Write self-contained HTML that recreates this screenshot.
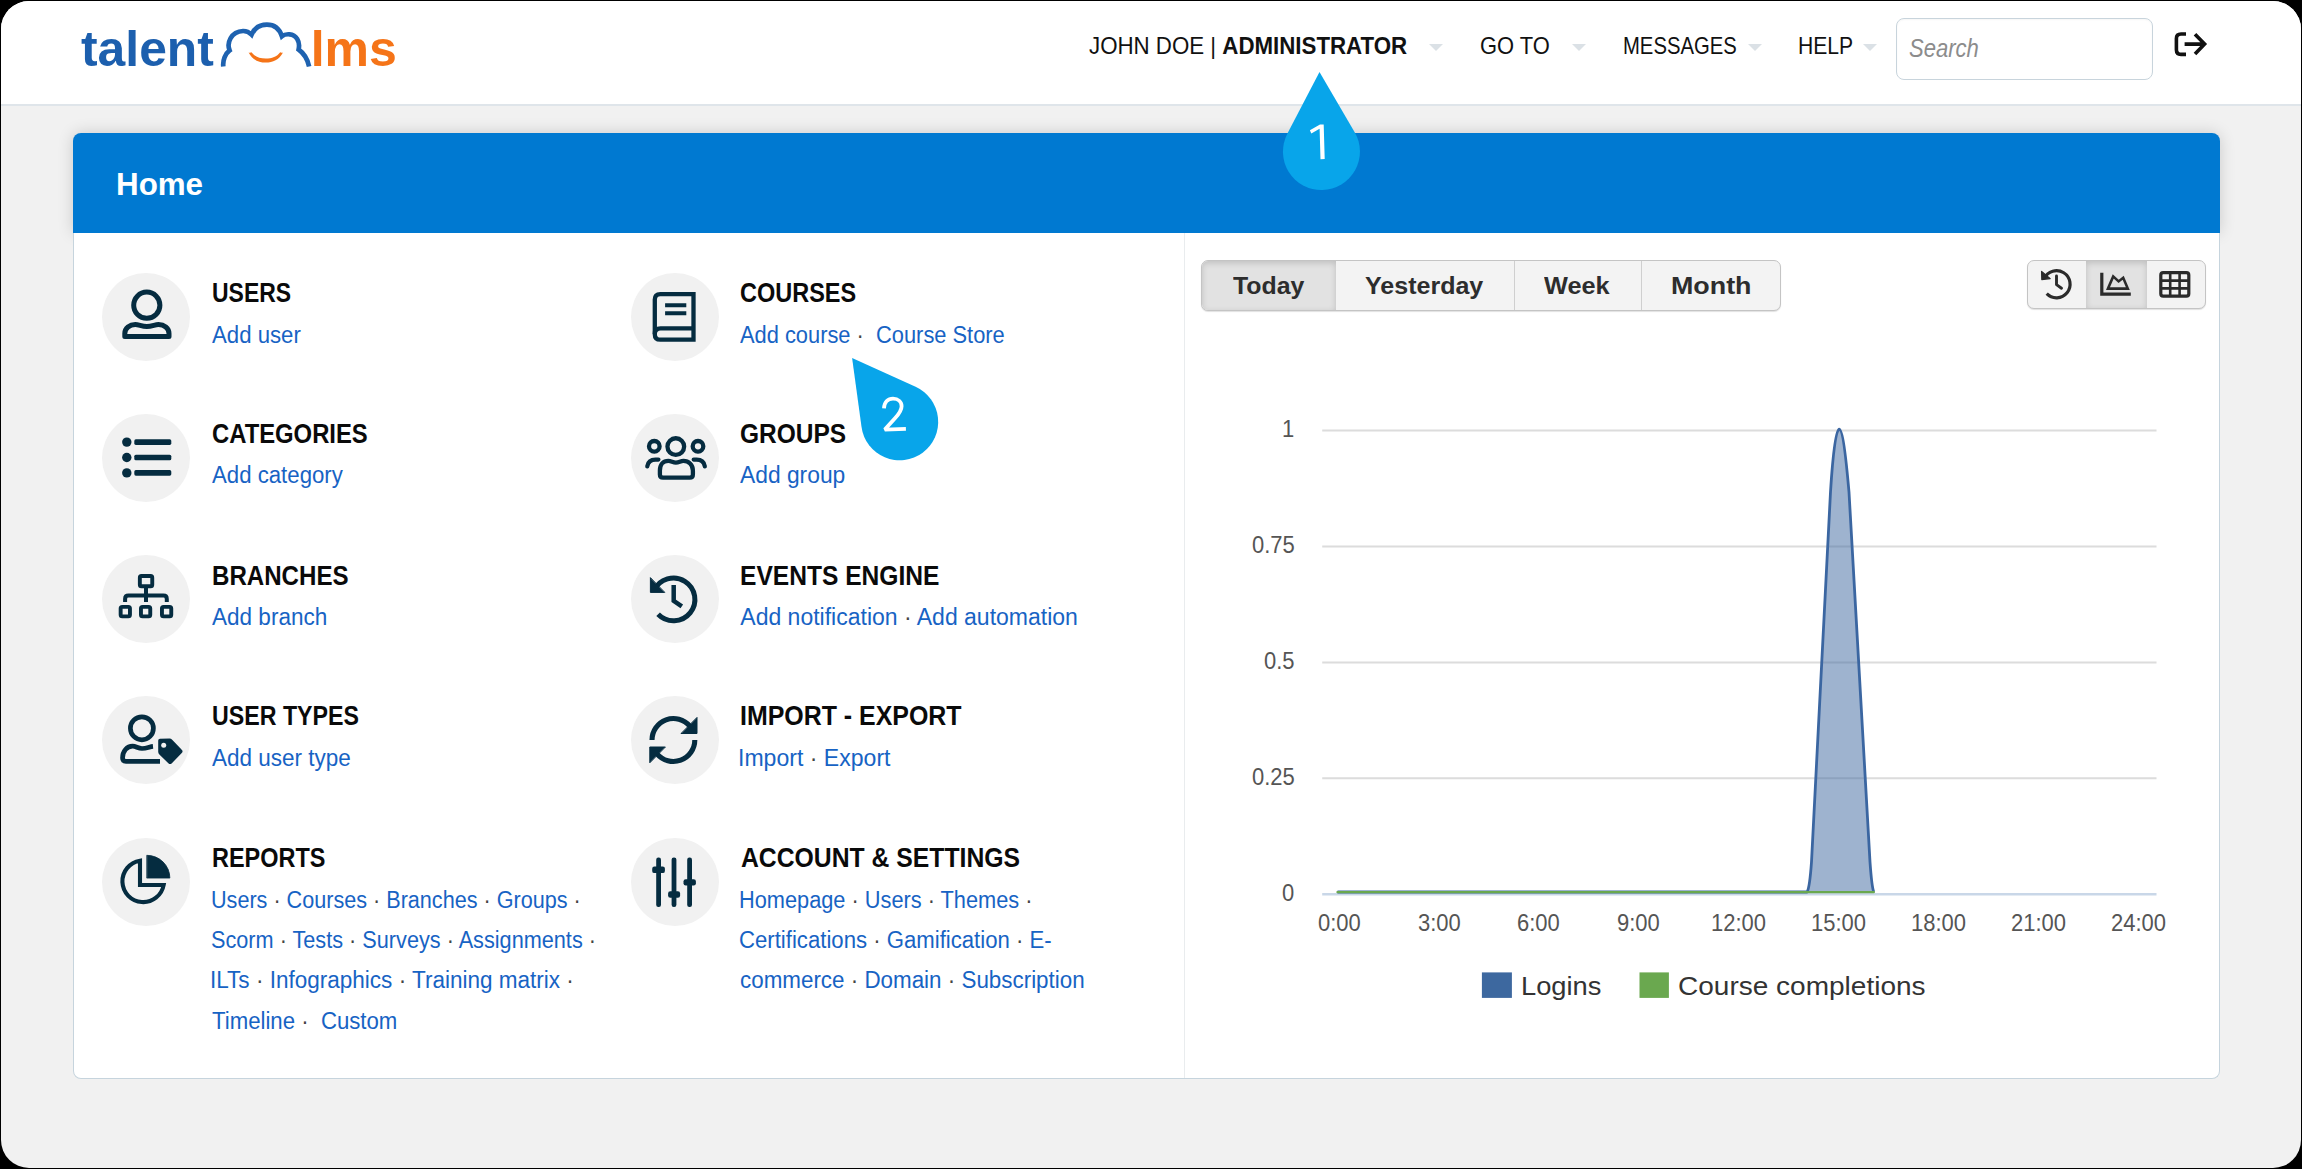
<!DOCTYPE html>
<html lang="en">
<head>
<meta charset="utf-8">
<title>TalentLMS - Home</title>
<style>
html,body{margin:0;padding:0;background:#000;}
body{width:2302px;height:1169px;overflow:hidden;position:relative;font-family:"Liberation Sans",sans-serif;}
#frame{position:absolute;left:1px;top:1px;width:2300px;height:1167px;border-radius:28px;background:#f1f1f1;overflow:hidden;}
#frame *{box-sizing:border-box;}
.abs{position:absolute;}
#topbar{position:absolute;left:0;top:0;width:2300px;height:104px;background:#fff;border-bottom:2px solid #dfe5ea;}
.t{position:absolute;white-space:nowrap;line-height:1;transform-origin:0 50%;}
.nav{color:#111;}
.caret{position:absolute;width:0;height:0;border-left:7px solid transparent;border-right:7px solid transparent;border-top:7px solid #dbe1e6;}
#search{position:absolute;left:1896px;top:17.5px;width:257px;height:62.5px;border:1.5px solid #c8d4dc;border-radius:8px;background:#fff;box-shadow:inset 0 1px 2px rgba(0,0,0,.04);}
#card{position:absolute;left:72px;top:132px;width:2147px;height:946px;}
#cardhead{position:absolute;left:0;top:0;width:2147px;height:100px;background:#0079d1;border-radius:8px 8px 0 0;box-shadow:0 0 16px rgba(0,0,0,.16);}
#cardbody{position:absolute;left:0;top:100px;width:2147px;height:846px;background:#fff;border:1.4px solid #c6d4dd;border-top:none;border-radius:0 0 8px 8px;}
#vdiv{position:absolute;left:1183px;top:232px;width:1px;height:845px;background:#e9ecee;}
.circ{position:absolute;width:88px;height:88px;border-radius:50%;background:#f1f1f1;}
.title{color:#0a0a0a;font-weight:bold;}
.lnk{color:#1763c4;}
.sep{color:#444;}
.bgroup{position:absolute;border:1px solid #c4c4c4;border-radius:7px;background:#f3f3f3;box-shadow:0 1px 1px rgba(0,0,0,.12);overflow:hidden;}
.bgroup .seg{position:absolute;top:0;height:100%;border-left:1px solid #cfcfcf;}
.bgroup .active{background:#e2e2e2;box-shadow:inset 0 2px 6px rgba(0,0,0,.16);}
.btxt{color:#2d2d2d;font-weight:bold;}
.clab{color:#555;}
svg{position:absolute;overflow:visible;}
</style>
</head>
<body>
<div id="frame">
<div id="pg" class="abs" style="left:-1px;top:-1px;width:2302px;height:1169px">
<!-- top bar -->
<div id="topbar" style="left:1px;top:1px;width:2300px;height:105px"></div>
<!-- logo cloud -->
<svg style="left:0;top:0" width="420" height="104" viewBox="0 0 420 104">
  <path d="M223.3,66.6 C222.6,60 225.5,53.5 229.6,50.4 C226.5,43 231,31.5 243,31 C246.5,30.9 249.5,32.5 251.6,34.6 C254.5,28 260,24.7 266.9,24.7 C274,24.7 279.5,29 281.9,36.3 C284,34.5 287,34.1 289.6,34.3 C296,34.8 300.5,41 298.6,49.5 C303.5,53 307.5,59 309.1,66.4" fill="none" stroke="#1e62b0" stroke-width="4.7" stroke-linecap="butt" stroke-linejoin="miter"/>
  <path d="M248.6,52.4 C252.5,59.6 258.5,62.6 265.7,62.6 C273,62.6 279,59.6 283,52.4 C282,52.9 281,52.8 280.2,52.3 C276.8,56.8 272,58.6 265.7,58.6 C259.5,58.6 254.8,56.8 251.4,52.3 C250.6,52.8 249.6,52.9 248.6,52.4 Z" fill="#f57418"/>
</svg>
<!-- carets -->
<div class="caret" style="left:1428.5px;top:43.5px"></div>
<div class="caret" style="left:1571.5px;top:43.5px"></div>
<div class="caret" style="left:1747.5px;top:43.5px"></div>
<div class="caret" style="left:1863px;top:43.5px"></div>
<div id="search"></div>
<!-- logout icon -->
<svg style="left:2170px;top:26px" width="44" height="38" viewBox="2170 26 44 38">
  <path d="M2186,34 H2181 Q2176.4,34 2176.4,38.6 V49.8 Q2176.4,54.4 2181,54.4 H2186" fill="none" stroke="#111" stroke-width="3.6" stroke-linecap="butt"/>
  <path d="M2184.6,44.1 H2203.8 M2195,34.2 L2204.6,44.1 L2195,54" fill="none" stroke="#111" stroke-width="3.6" stroke-linecap="butt" stroke-linejoin="miter"/>
</svg>

<!-- card -->
<div id="card" style="left:73px;top:133px">
  <div id="cardhead"></div>
  <div id="cardbody"></div>
</div>
<div id="vdiv" style="left:1184px;top:233px"></div>

<!-- icon circles -->
<div class="circ" style="left:102px;top:272.5px"></div>
<div class="circ" style="left:102px;top:413.5px"></div>
<div class="circ" style="left:102px;top:555px"></div>
<div class="circ" style="left:102px;top:696px"></div>
<div class="circ" style="left:102px;top:837.5px"></div>
<div class="circ" style="left:630.5px;top:272.5px"></div>
<div class="circ" style="left:630.5px;top:413.5px"></div>
<div class="circ" style="left:630.5px;top:555px"></div>
<div class="circ" style="left:630.5px;top:696px"></div>
<div class="circ" style="left:630.5px;top:837.5px"></div>

<!-- ICONS -->
<svg id="icons" style="left:0;top:0" width="2302" height="1169" viewBox="0 0 2302 1169" fill="none" stroke="#052c40" stroke-width="5" stroke-linecap="round" stroke-linejoin="round">
  <!-- users -->
  <circle cx="146.8" cy="305.2" r="13.1"/>
  <path d="M124.8,336.5 H169 V333.4 C169,328 164,324.5 158.5,324.5 C155,324.5 152,326.6 146.9,326.6 C141.8,326.6 138.8,324.5 135.3,324.5 C129.8,324.5 124.8,328 124.8,333.4 Z"/>
  <!-- categories list -->
  <g fill="#052c40" stroke="none">
    <rect x="134.3" y="439.3" width="37" height="5.6" rx="1.6"/><rect x="134.3" y="454.7" width="37" height="5.6" rx="1.6"/><rect x="134.3" y="470.1" width="37" height="5.6" rx="1.6"/>
    <circle cx="126.8" cy="442.1" r="4.7"/><circle cx="126.8" cy="457.5" r="4.7"/><circle cx="126.8" cy="472.9" r="4.7"/>
  </g>
  <!-- branches sitemap -->
  <g stroke-width="3.9" stroke-linejoin="round">
    <rect x="139.85" y="576.05" width="12.4" height="10.2" rx="1.6"/>
    <rect x="120.65" y="606.85" width="9.3" height="9.5" rx="1.6"/>
    <rect x="140.95" y="606.85" width="9.3" height="9.5" rx="1.6"/>
    <rect x="161.95" y="606.85" width="9.3" height="9.5" rx="1.6"/>
    <path d="M146,588 V601.9 M125.1,601.9 V599 Q125.1,595.6 128.5,595.6 H163.4 Q166.8,595.6 166.8,599 V601.9" stroke-linecap="butt" stroke-width="4"/>
  </g>
  <!-- user types -->
  <circle cx="141.9" cy="728.3" r="11.5" stroke-width="4.7"/>
  <path d="M153,746.3 C150,746.6 146.5,748.5 142,748.5 C138,748.5 136,746.1 132.6,746.1 C127,746.1 122.55,751 122.55,758 Q122.55,761.35 126,761.35 H160" stroke-width="4.7" stroke-linecap="butt"/>
  <path d="M159.4,740.6 Q159.4,740 160,740 L169.6,739.8 Q170.6,739.8 171.3,740.5 L180.9,750.6 Q181.7,751.4 180.9,752.2 L171,762.4 Q170.1,763.3 169.2,762.4 L160.2,753.6 Q159.4,752.8 159.4,751.8 Z" fill="#052c40" stroke-width="2.4"/>
  <circle cx="163.7" cy="745.2" r="2.5" fill="#f1f1f1" stroke="none"/>
  <!-- reports pie -->
  <path d="M140,860.75 A20.8,20.8 0 1 0 163.67,885 H140 Z" stroke-width="4.1" stroke-linejoin="miter"/>
  <path d="M147.1,855.3 A22.75,22.75 0 0 1 169.85,878.05 H147.1 Z" fill="#052c40" stroke-width="0.8"/>

  <!-- courses book -->
  <g stroke-width="4.3">
    <path d="M693.5,294.1 H660.3 Q654.8,294.1 654.8,299.6 V334.2 Q654.8,339.7 660.3,339.7 H693.5 Z" stroke-linejoin="miter"/>
    <path d="M654.8,334 Q654.8,328.3 660.5,328.3 H693.5" stroke-linecap="butt"/>
    <path d="M665.1,305.2 H686.3 M665.1,313.3 H686.3" stroke-linecap="butt" stroke-width="4"/>
  </g>
  <!-- groups -->
  <g stroke-width="4.3">
    <circle cx="675.8" cy="446.6" r="8.35"/>
    <circle cx="654.3" cy="446.3" r="5.3"/>
    <circle cx="698" cy="446.3" r="5.3"/>
    <path d="M663,477.6 H689.8 Q692.9,477.6 692.9,474.5 V470.5 C692.9,464.5 688.5,460.9 683.5,460.9 C680.5,460.9 679,462.6 675.9,462.6 C672.8,462.6 671.3,460.9 668.3,460.9 C663.3,460.9 659.9,464.5 659.9,470.5 V474.5 Q659.9,477.6 663,477.6 Z"/>
    <path d="M647.3,466.3 Q648.3,459.6 655.5,459.6 H658.4 M704.8,466.3 Q703.8,459.6 696.6,459.6 H693.7"/>
  </g>
  <!-- events history -->
  <path d="M658.1,614.3 A21.4,21.4 0 1 0 654.1,590.4" stroke-linecap="butt" stroke-width="5"/>
  <path d="M673.7,585 V600.8 L681.8,606.4" stroke-linecap="butt" stroke-linejoin="miter" stroke-width="4.5"/>
  <path d="M650.4,578 L650.4,592.4 L664.4,592.4 Z" fill="#052c40" stroke-width="1"/>
  <!-- import export sync -->
  <g stroke-width="5.1" stroke-linecap="butt">
    <path d="M652,740 A21.4,21.4 0 0 1 689.8,726.2"/>
    <path d="M694.8,740 A21.4,21.4 0 0 1 657,753.8"/>
  </g>
  <path d="M697,717.8 L697,733.5 L681.4,733.5 Z" fill="#052c40" stroke-width="1"/>
  <path d="M649.8,762.4 L649.8,747 L665,747 Z" fill="#052c40" stroke-width="1"/>
  <!-- account sliders -->
  <g fill="#052c40" stroke="none">
    <rect x="656.2" y="857.5" width="4.8" height="49.5" rx="2.2"/><rect x="671.6" y="857.5" width="4.8" height="49.5" rx="2.2"/><rect x="687.2" y="857.5" width="4.8" height="49.5" rx="2.2"/>
    <rect x="652.2" y="866.5" width="12.7" height="6.6" rx="2.2"/><rect x="668.1" y="891.2" width="12" height="6.5" rx="2.2"/><rect x="683.5" y="879.2" width="12.4" height="6.3" rx="2.2"/>
  </g>
</svg>

<!-- button group 1 -->
<div class="bgroup" style="left:1201px;top:260px;width:579.5px;height:50.5px">
  <div class="seg active" style="left:0;width:133.5px;border-left:none"></div>
  <div class="seg" style="left:133.5px;width:178px;border-left:none"></div>
  <div class="seg" style="left:311.5px;width:127.5px"></div>
  <div class="seg" style="left:439px;width:140px"></div>
</div>
<!-- button group 2 -->
<div class="bgroup" style="left:2027px;top:260px;width:178.5px;height:48.5px">
  <div class="seg" style="left:0;width:58px;border-left:none"></div>
  <div class="seg active" style="left:58px;width:60.5px;border-left:none"></div>
  <div class="seg" style="left:118.5px;width:60px;border-left:none"></div>
</div>
<svg style="left:0;top:0" width="2302" height="400" viewBox="0 0 2302 400" fill="none" stroke="#2b2b2b" stroke-width="3.2" stroke-linecap="round" stroke-linejoin="round">
  <!-- history -->
  <path d="M2046.7,293.7 A13.6,13.6 0 1 0 2044.2,278.4" stroke-linecap="butt"/>
  <path d="M2056.5,276 V284.6 L2061.5,288.2" stroke-width="2.9"/>
  <path d="M2041.6,271.4 L2041.8,279.6 L2050.2,278.6 Z" fill="#2b2b2b" stroke-width="1.2"/>
  <!-- area chart -->
  <path d="M2101.8,272.8 V294.2 H2130.8" stroke-linecap="butt" stroke-linejoin="miter"/>
  <path d="M2108,288.6 L2113.2,276.4 L2118.6,281.4 L2123.2,277.8 L2127.8,288.6 Z" stroke-width="2.6" stroke-linejoin="miter"/>
  <!-- table -->
  <rect x="2160.8" y="272.6" width="28" height="23.6" rx="2.4"/>
  <path d="M2160.8,280.6 H2188.8 M2160.8,288.4 H2188.8 M2170.2,272.6 V296.2 M2179.6,272.6 V296.2" stroke-width="2.6" stroke-linecap="butt"/>
</svg>

<!-- chart -->
<svg style="left:0;top:0" width="2302" height="1169" viewBox="0 0 2302 1169">
  <path d="M1322.2,430.6 H2156.5 M1322.2,546.6 H2156.5 M1322.2,662.4 H2156.5 M1322.2,778.2 H2156.5" stroke="#dcdcdc" stroke-width="2"/>
  <path d="M1322.2,894.3 H2156.5" stroke="#c9d7e8" stroke-width="2.4"/>
  <path d="M1807.1,892 C1809.5,888 1810.5,876 1811.5,862 L1830.5,492 C1833,452 1836,429.2 1839.1,429.2 C1842.3,429.2 1845.5,452 1849,492 L1870,862 C1871,876 1872,888 1873.8,892 Z" fill="rgba(61,104,159,0.5)" stroke="none"/>
  <path d="M1337.5,892 H1807.1 C1809.5,888 1810.5,876 1811.5,862 L1830.5,492 C1833,452 1836,429.2 1839.1,429.2 C1842.3,429.2 1845.5,452 1849,492 L1870,862 C1871,876 1872,888 1873.8,892" fill="none" stroke="#3b66a1" stroke-width="2.8" stroke-linejoin="round"/>
  <path d="M1337.5,892.1 H1873.8" stroke="#6aa84f" stroke-width="2.4" stroke-linecap="round"/>
  <rect x="1481.9" y="972.4" width="30" height="25.5" fill="#3d689f"/>
  <rect x="1639.5" y="972.4" width="29.4" height="25.5" fill="#6aa84f"/>
</svg>

<!-- callout drops -->
<svg style="left:0;top:0" width="2302" height="1169" viewBox="0 0 2302 1169">
  <g transform="translate(1319.5,72) rotate(-1.4)">
    <path d="M0,0 L33.7,61 A38.5,38.5 0 1 1 -33.7,61 Z" fill="#08a5ea"/>
  </g>
  <path d="M1309.9,130.3 L1320,124.6 L1323.7,124.4 L1324.7,159 L1320.5,159.2 L1319.6,128.8 L1311.3,133.4 Z" fill="#fff"/>
  <g transform="translate(852.1,358) rotate(-36.7)">
    <path d="M0,0 L33.7,61 A38.5,38.5 0 1 1 -33.7,61 Z" fill="#08a5ea"/>
  </g>
  <path d="M884,408.4 C884.3,402 888,398.7 893,398.7 C898.2,398.7 901.6,401.8 901.6,406.2 C901.6,410.4 899.3,413.6 895,418.2 L884.8,429.6 L905.9,428.9" fill="none" stroke="#fff" stroke-width="3.8" stroke-linejoin="miter" stroke-miterlimit="2"/>
</svg>

<!-- text -->
<div class="t nav" style="left:1089.20px;top:34.70px;font-size:23.4px;transform:scaleX(0.9527);">JOHN DOE | <b>ADMINISTRATOR</b></div>
<div class="t nav" style="left:1480.26px;top:34.70px;font-size:23.4px;transform:scaleX(0.9368);">GO TO</div>
<div class="t nav" style="left:1623.03px;top:34.70px;font-size:23.4px;transform:scaleX(0.8659);">MESSAGES</div>
<div class="t nav" style="left:1797.70px;top:34.70px;font-size:23.4px;transform:scaleX(0.9024);">HELP</div>
<div class="t" style="left:1909.40px;top:34.60px;font-size:26px;transform:scaleX(0.8483);color:#8c8c8c"><i>Search</i></div>
<div class="t" style="left:80.60px;top:23.90px;font-size:50px;transform:scaleX(0.9962);color:#1c5fae;font-weight:bold">talent</div>
<div class="t" style="left:310.69px;top:23.90px;font-size:50px;color:#f57418;font-weight:bold">lms</div>
<div class="t" style="left:115.99px;top:168.90px;font-size:31.2px;transform:scaleX(1.0046);color:#fff;font-weight:bold">Home</div>
<div class="t title" style="left:212.46px;top:279.30px;font-size:27.3px;transform:scaleX(0.8412);">USERS</div>
<div class="t" style="left:212.10px;top:323.90px;font-size:23px;transform:scaleX(0.9653);"><span class="lnk">Add user</span></div>
<div class="t title" style="left:212.43px;top:419.90px;font-size:27.3px;transform:scaleX(0.8727);">CATEGORIES</div>
<div class="t" style="left:212.10px;top:464.20px;font-size:23px;transform:scaleX(0.9652);"><span class="lnk">Add category</span></div>
<div class="t title" style="left:212.42px;top:561.70px;font-size:27.3px;transform:scaleX(0.8828);">BRANCHES</div>
<div class="t" style="left:212.10px;top:606.30px;font-size:23px;transform:scaleX(0.9799);"><span class="lnk">Add branch</span></div>
<div class="t title" style="left:212.45px;top:702.30px;font-size:27.3px;transform:scaleX(0.8496);">USER TYPES</div>
<div class="t" style="left:212.10px;top:746.70px;font-size:23px;transform:scaleX(0.9785);"><span class="lnk">Add user type</span></div>
<div class="t title" style="left:212.44px;top:844.40px;font-size:27.3px;transform:scaleX(0.8597);">REPORTS</div>
<div class="t" style="left:211.16px;top:888.80px;font-size:23px;transform:scaleX(0.9390);"><span class="lnk">Users</span><span class="sep"> · </span><span class="lnk">Courses</span><span class="sep"> · </span><span class="lnk">Branches</span><span class="sep"> · </span><span class="lnk">Groups</span><span class="sep"> ·</span></div>
<div class="t" style="left:211.16px;top:929.00px;font-size:23px;transform:scaleX(0.9421);"><span class="lnk">Scorm</span><span class="sep"> · </span><span class="lnk">Tests</span><span class="sep"> · </span><span class="lnk">Surveys</span><span class="sep"> · </span><span class="lnk">Assignments</span><span class="sep"> ·</span></div>
<div class="t" style="left:210.14px;top:969.40px;font-size:23px;transform:scaleX(0.9792);"><span class="lnk">ILTs</span><span class="sep"> · </span><span class="lnk">Infographics</span><span class="sep"> · </span><span class="lnk">Training matrix</span><span class="sep"> ·</span></div>
<div class="t" style="left:212.10px;top:1009.70px;font-size:23px;transform:scaleX(0.9644);"><span class="lnk">Timeline</span><span class="sep"> ·&nbsp; </span><span class="lnk">Custom</span></div>
<div class="t title" style="left:740.44px;top:279.30px;font-size:27.3px;transform:scaleX(0.8603);">COURSES</div>
<div class="t" style="left:740.30px;top:323.90px;font-size:23px;transform:scaleX(0.9499);"><span class="lnk">Add course</span><span class="sep"> ·&nbsp; </span><span class="lnk">Course Store</span></div>
<div class="t title" style="left:740.40px;top:419.90px;font-size:27.3px;transform:scaleX(0.8966);">GROUPS</div>
<div class="t" style="left:740.30px;top:464.20px;font-size:23px;transform:scaleX(0.9919);"><span class="lnk">Add group</span></div>
<div class="t title" style="left:740.40px;top:561.70px;font-size:27.3px;transform:scaleX(0.9003);">EVENTS ENGINE</div>
<div class="t" style="left:740.30px;top:606.30px;font-size:23px;"><span class="lnk">Add notification</span><span class="sep"> · </span><span class="lnk">Add automation</span></div>
<div class="t title" style="left:740.39px;top:702.30px;font-size:27.3px;transform:scaleX(0.9129);">IMPORT - EXPORT</div>
<div class="t" style="left:738.30px;top:746.70px;font-size:23px;transform:scaleX(1.0024);"><span class="lnk">Import</span><span class="sep"> · </span><span class="lnk">Export</span></div>
<div class="t title" style="left:741.30px;top:844.40px;font-size:27.3px;transform:scaleX(0.9065);">ACCOUNT &amp; SETTINGS</div>
<div class="t" style="left:739.35px;top:888.80px;font-size:23px;transform:scaleX(0.9459);"><span class="lnk">Homepage</span><span class="sep"> · </span><span class="lnk">Users</span><span class="sep"> · </span><span class="lnk">Themes</span><span class="sep"> ·</span></div>
<div class="t" style="left:739.34px;top:929.00px;font-size:23px;transform:scaleX(0.9631);"><span class="lnk">Certifications</span><span class="sep"> · </span><span class="lnk">Gamification</span><span class="sep"> · </span><span class="lnk">E-</span></div>
<div class="t" style="left:740.30px;top:969.40px;font-size:23px;transform:scaleX(0.9733);"><span class="lnk">commerce</span><span class="sep"> · </span><span class="lnk">Domain</span><span class="sep"> · </span><span class="lnk">Subscription</span></div>
<div class="t btxt" style="left:1232.60px;top:275.20px;font-size:23.5px;transform:scaleX(1.0579);">Today</div>
<div class="t btxt" style="left:1364.90px;top:275.20px;font-size:23.5px;transform:scaleX(1.0649);">Yesterday</div>
<div class="t btxt" style="left:1543.80px;top:275.20px;font-size:23.5px;transform:scaleX(1.0776);">Week</div>
<div class="t btxt" style="left:1670.66px;top:275.20px;font-size:23.5px;transform:scaleX(1.1422);">Month</div>
<div class="t clab" style="left:1282.18px;top:417.20px;font-size:24px;transform:scaleX(0.9160);">1</div>
<div class="t clab" style="left:1251.62px;top:533.20px;font-size:24px;transform:scaleX(0.9160);">0.75</div>
<div class="t clab" style="left:1263.85px;top:649.00px;font-size:24px;transform:scaleX(0.9160);">0.5</div>
<div class="t clab" style="left:1251.62px;top:764.80px;font-size:24px;transform:scaleX(0.9160);">0.25</div>
<div class="t clab" style="left:1282.18px;top:880.60px;font-size:24px;transform:scaleX(0.9160);">0</div>
<div class="t clab" style="left:1317.56px;top:910.60px;font-size:24px;transform:scaleX(0.9160);">0:00</div>
<div class="t clab" style="left:1417.56px;top:910.60px;font-size:24px;transform:scaleX(0.9160);">3:00</div>
<div class="t clab" style="left:1517.10px;top:910.60px;font-size:24px;transform:scaleX(0.9160);">6:00</div>
<div class="t clab" style="left:1617.10px;top:910.60px;font-size:24px;transform:scaleX(0.9160);">9:00</div>
<div class="t clab" style="left:1710.99px;top:910.60px;font-size:24px;transform:scaleX(0.9160);">12:00</div>
<div class="t clab" style="left:1810.99px;top:910.60px;font-size:24px;transform:scaleX(0.9160);">15:00</div>
<div class="t clab" style="left:1910.99px;top:910.60px;font-size:24px;transform:scaleX(0.9160);">18:00</div>
<div class="t clab" style="left:2010.99px;top:910.60px;font-size:24px;transform:scaleX(0.9160);">21:00</div>
<div class="t clab" style="left:2110.99px;top:910.60px;font-size:24px;transform:scaleX(0.9160);">24:00</div>
<div class="t" style="left:1520.66px;top:973.40px;font-size:26.7px;transform:scaleX(1.0221);color:#333">Logins</div>
<div class="t" style="left:1677.65px;top:973.40px;font-size:26.7px;transform:scaleX(1.0498);color:#333">Course completions</div>
</div>
</div>
</body>
</html>
